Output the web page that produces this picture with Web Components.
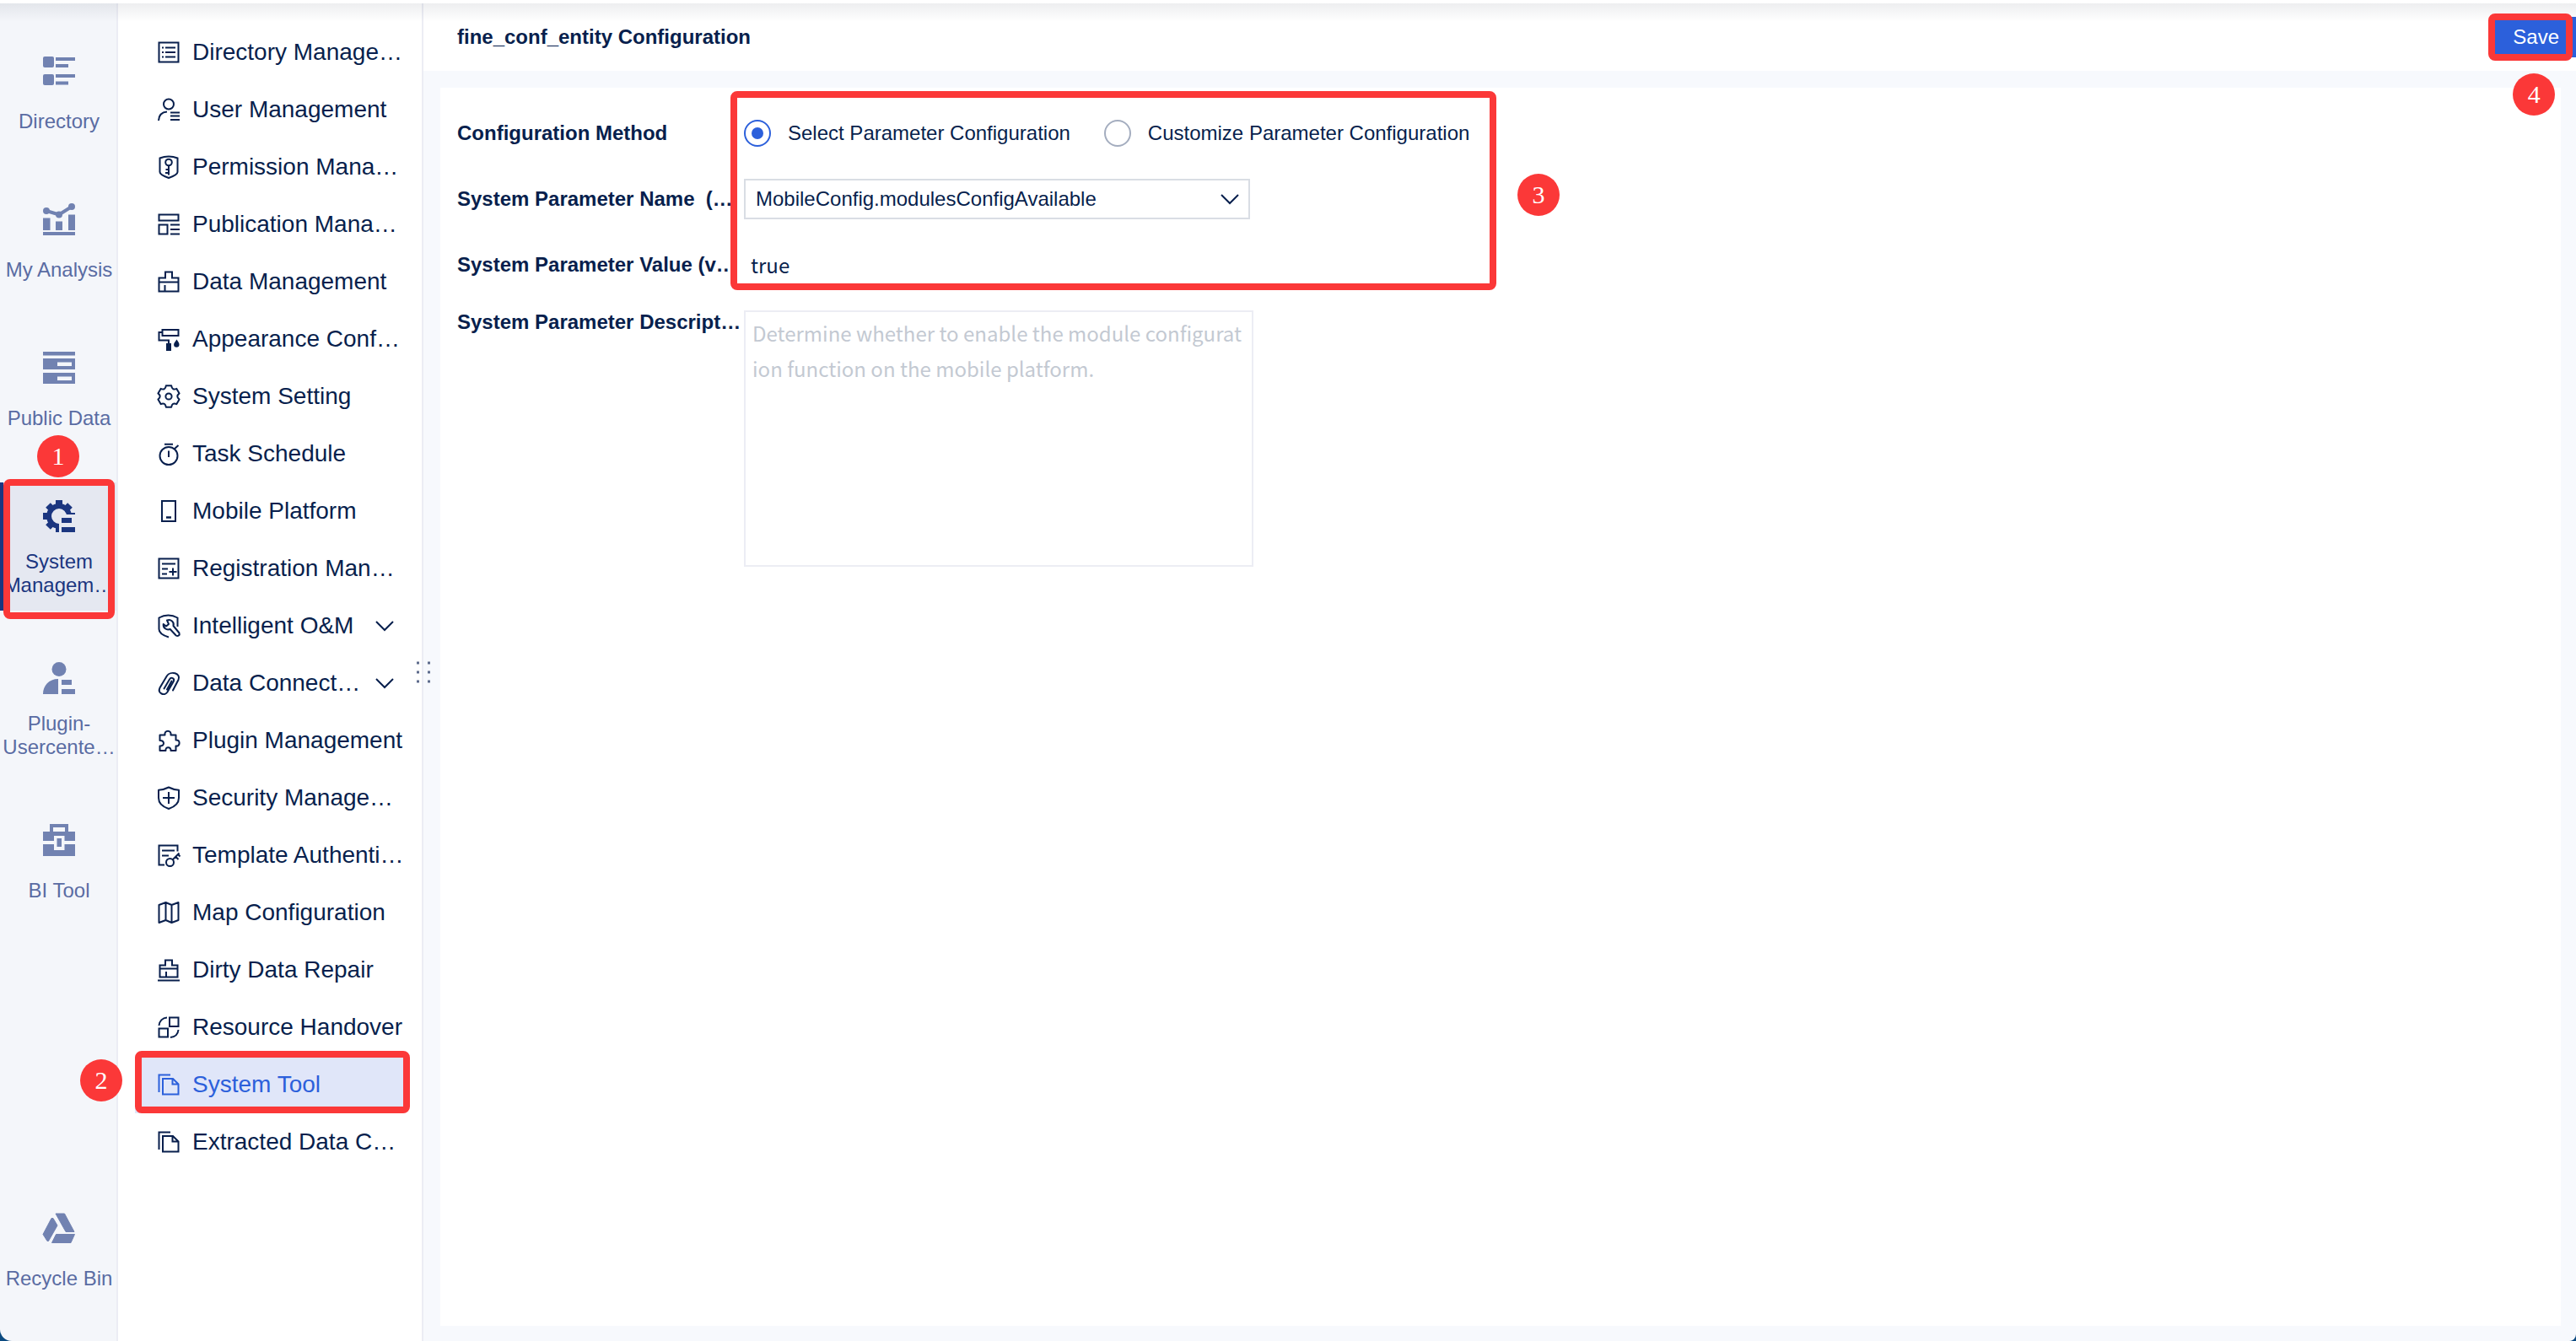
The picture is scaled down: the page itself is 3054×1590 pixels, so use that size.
<!DOCTYPE html>
<html lang="en">
<head>
<meta charset="utf-8">
<title>System Tool</title>
<style>
  html, body {
    margin: 0;
    background: #fff;
  }

  body {
    --ink: #081f4d;
    --blue: #2c60db;
    --red: #fb3838;
    --line: #ecedf4;
    --page: #f7f9fd;
    color: var(--ink);
    font: 24px/28px "Liberation Sans", Arial, sans-serif;
  }
</style>
</head>
<body>
<app-shell>
  <nav-rail slot="rail">
    <rail-item icon="directory">Directory</rail-item>
    <rail-item icon="analysis">My Analysis</rail-item>
    <rail-item icon="public">Public Data</rail-item>
    <rail-item icon="system" active>System<br>Managem…
      <step-mark slot="mark" n="1" style="--frame: -4px 2px -10px 4px; --x: 44px; --y: -56px"></step-mark>
    </rail-item>
    <rail-item icon="plugin-user">Plugin-<br>Usercente…</rail-item>
    <rail-item icon="tool">BI Tool</rail-item>
    <rail-item icon="recycle" class="last">Recycle Bin</rail-item>
  </nav-rail>

  <side-menu slot="menu">
    <menu-item icon="list">Directory Manage…</menu-item>
    <menu-item icon="user">User Management</menu-item>
    <menu-item icon="permission">Permission Mana…</menu-item>
    <menu-item icon="publication">Publication Mana…</menu-item>
    <menu-item icon="data">Data Management</menu-item>
    <menu-item icon="appearance">Appearance Conf…</menu-item>
    <menu-item icon="gear">System Setting</menu-item>
    <menu-item icon="timer">Task Schedule</menu-item>
    <menu-item icon="mobile">Mobile Platform</menu-item>
    <menu-item icon="registration">Registration Man…</menu-item>
    <menu-item icon="wrench" expandable>Intelligent O&amp;M</menu-item>
    <menu-item icon="clip" expandable>Data Connect…</menu-item>
    <menu-item icon="puzzle">Plugin Management</menu-item>
    <menu-item icon="security">Security Manage…</menu-item>
    <menu-item icon="template">Template Authenti…</menu-item>
    <menu-item icon="map">Map Configuration</menu-item>
    <menu-item icon="repair">Dirty Data Repair</menu-item>
    <menu-item icon="handover">Resource Handover</menu-item>
    <menu-item icon="files" active>System Tool
      <step-mark slot="mark" n="2" style="--frame: -6px -6px 0 0; --x: -65px; --y: 4px"></step-mark>
    </menu-item>
    <menu-item icon="files">Extracted Data C…</menu-item>
  </side-menu>

  <page-header slot="header">
    fine_conf_entity Configuration
    <step-mark slot="mark" n="4" style="--frame: -4px 4px -4px -5px; --x: 24px; --y: 67px"></step-mark>
  </page-header>

  <config-form></config-form>
</app-shell>

<script>
  // 28x28 outline icons for the menu, 38x38 solid icons for the rail
  const ICONS = {
    list: '<path d="M2.5 2.5h23v23h-23zM6 8.5h2M6 14h2M6 19.5h2M10 8.5h12M10 14h12M10 19.5h12"/>',
    user: '<circle cx="14" cy="7.5" r="6"/><path d="M2 27c.3-6.500 4-10 10-10.500M16 17.500h11M16 21.500h11M16 26h11"/>',
    permission: '<path d="M14 1.500c-4 0-7.500.8-10.500 2V20c0 3 5 5 10.500 7 5.500-2 10.500-4 10.500-7V3.500c-3-1.200-6.500-2-10.500-2z"/><circle cx="14" cy="8.500" r="3.800"/><path d="M14 12.500v11M10.500 17H14M10 21h4"/>',
    publication: '<path d="M2.500 2.500h23v7h-23zM2.500 14.500h10v11h-10zM16 14.500h11M16 20h11M16 25.500h11"/>',
    data: '<path d="M2.500 9.500h7.500v-7h8v7h7.500v16h-23zM2.500 14.500h23M9.500 18v7"/>',
    appearance: '<path d="M6.500 3h19v7h-19zM6 6H2.500v9.500H14V20"/><path class="f" d="M11 19h6v9h-6zM23.500 14.500c2 3 3 4.200 3 6a3.200 3.200 0 0 1-6.400 0c0-1.800 1.400-3 3.400-6z"/>',
    gear: '<g transform="translate(14 14)"><path stroke-linejoin="round" d="M-3.200-12.700H3.200Q4-6.900 9.400-9.100L12.600-3.600Q8 0 12.600 3.600L9.400 9.100Q4 6.900 3.200 12.700H-3.200Q-4 6.900-9.400 9.100L-12.600 3.600Q-8 0-12.600-3.600L-9.400-9.100Q-4-6.900-3.200-12.700z"/><circle r="3.600"/></g>',
    timer: '<circle cx="14" cy="16.500" r="10.500"/><path d="M9 2.700h10M14 10.500V18M20.500 8.500l5-4.500"/>',
    mobile: '<path d="M6 2h16v24H6z"/><path d="M11 21.500h6" stroke-width="2.500"/>',
    registration: '<path d="M2.500 2.500h23v23h-23zM6 8.500h16M6 14.500h7M6 20.500h6M14.500 18h9M19 13.500v9"/>',
    wrench: '<path d="M24.500 15V4.500C21 2.500 17.500 1.500 13.500 1.500s-7.500 1-11 3V18c0 5 5 7.500 11.500 9.500"/><path stroke-linejoin="round" d="M12 7.500c4.500-1.800 9 2 7.500 6.500l7 8.500c1 2.500-1.500 4.500-3.800 3l-7-7.500c-4.500 1.500-8.500-1.500-8-6l3.300 2.500 3-2.500z"/>',
    clip: '<path stroke-linecap="round" d="M8.500 20.500 15 9.500c2-3.300 6.500-1 4.700 2.500l-7.200 12.500c-3.500 5.500-12 1.500-9-5L11.800 5.500C16-1 29 2 25.500 10L19 22.500M12 21.500l5.500-10"/>',
    puzzle: '<path stroke-linejoin="round" d="M3.500 7.500h6c-1.200-6.500 8.200-6.500 7 0h6v6c5.500-1 5.500 8 0 7v5.500h-6c.8-5-7-5-6 0h-7v-5.500c6 .5 6-7 0-6.500z"/>',
    security: '<path stroke-linejoin="round" d="M14 1.500c3.500 1.800 7.500 3 12 3.200V14c0 6.500-4.500 10.500-12 13C6.500 24.500 2 20.500 2 14V4.700c4.500-.2 8.500-1.400 12-3.200zM7 14h14M14 7v14"/>',
    template: '<path d="M24.500 9.500v-7h-22v23H9M6 8.500h15M6 14.500h8"/><circle cx="15.500" cy="22.500" r="4.500"/><path d="m18.500 19.500 8-8M22.500 16l3 3M25 13l2.500 2.500"/>',
    map: '<path stroke-linejoin="round" d="m2.500 5 8-3 7 3 8-3v21l-8 3-7-3-8 3zM10.500 2v21M17.500 5v21"/>',
    repair: '<path d="M3.500 8.500h6.500v-6h8v6h6.500v14h-21zM3.500 12.500h21M11 16v6M1 26.500h26"/>',
    handover: '<path d="M15 2.500h10.500V13H15zM2.500 15.500H13v10H2.500zM2.500 12c.5-5 4-9 9.500-9.500M25.500 17c-.5 5-4 8.500-9.500 9"/>',
    files: '<path d="M2.500 23V2.500H16M7 7h12l6.500 6.500v12H7zM18.500 7v6.500h7"/>',
    directory: '<rect y="2" width="13" height="13" rx="2"/><rect y="23" width="13" height="13" rx="2"/><path d="M15 3h23v4H15zM15 11h15v4H15zM15 23h23v4H15zM15 31.500h15v4H15z"/>',
    analysis: '<path d="M0 17.500h8.500V32H0zM15 21.500h8V32h-8zM30 13.500h8V32h-8zM0 34h38v4H0z"/><circle cx="4" cy="9" r="4"/><circle cx="19" cy="13.500" r="4"/><circle cx="34" cy="4" r="4"/><path d="m4 9 15 4.500L34 4" fill="none" stroke="currentColor" stroke-width="4"/>',
    public: '<path fill-rule="evenodd" d="M0 0h38v4.500H0zM0 8h38v13H0zM17 12.500V17h17v-4.500zM0 25h38v13H0zM17 29.500V34h17v-4.500z"/>',
    system: '<clipPath id="c"><path d="M0 0h38v17H19v21H0z"/></clipPath><g clip-path="url(#c)" fill="none" stroke="currentColor"><circle cx="19" cy="19" r="12" stroke-width="6"/><path stroke-width="8" d="M19 0v7M19 38v-7M0 19h7M38 19h-7M6 6l5 5M32 6l-5 5M6 32l5-5"/></g><path d="M22 21h12v6H22zM22 32h16v6H22z"/>',
    'plugin-user': '<circle cx="19" cy="8.500" r="8.500"/><path d="M0 38C0 28 7 20 18 20v18zM22 21h12v6H22zM22 32h16v6H22z"/>',
    tool: '<path fill-rule="evenodd" d="M8 0h22v9h8v11H25.500v-6h-12.500v6H0V9h8zM12 4v5h14V4zM0 24h13v7h12.500v-7H38v14H0zM16.500 17h5.500v10h-5.500z"/>',
    recycle: '<path stroke="currentColor" stroke-linejoin="round" d="m15 2 10.500 0L37 23.500H27zM10 7.500h2l5 8.500L6.500 34.500H5L0 26.500zM15.500 26.500h22l-4.500 10H10.500z"/>',
  };

  function define(name, html) {
    customElements.define(name, class extends HTMLElement {
      constructor() {
        super();
        this.attachShadow({ mode: 'open' });
      }

      connectedCallback() {
        this.shadowRoot.innerHTML = typeof html === 'function' ? html(this) : html;
      }
    });
  }

  define('ui-icon', (el) => {
    const size = el.getAttribute('size') || 28;
    const solid = size === '38';
    return `
      <style>
        :host { display: block; flex: none; }
        svg { display: block; overflow: visible; }
        .f { fill: currentColor; stroke: none; }
      </style>
      <svg width="${size}" height="${size}" viewBox="0 0 ${size} ${size}" aria-hidden="true"
        ${solid ? 'fill="currentColor"' : 'fill="none" stroke="currentColor" stroke-width="2"'}>${ICONS[el.getAttribute('name')]}</svg>`;
  });

  define('step-mark', (el) => `
    <style>
      :host { position: absolute; inset: 0; z-index: 5; pointer-events: none; }
      .frame {
        position: absolute;
        inset: var(--frame);
        border: 8px solid var(--red);
        border-radius: 8px;
      }
      .badge {
        position: absolute;
        left: var(--x);
        top: var(--y);
        width: 50px;
        height: 50px;
        border-radius: 50%;
        background: var(--red);
        color: #fff;
        font: 30px/50px "Liberation Serif", "Times New Roman", serif;
        text-align: center;
      }
    </style>
    <div class="frame"></div>
    <div class="badge">${el.getAttribute('n')}</div>`);

  define('app-shell', `
    <style>
      :host { display: block; padding-top: 4px; }
      .app {
        position: relative;
        display: grid;
        grid-template-columns: 140px 362px minmax(0, 1fr);
        min-height: calc(100vh - 4px);
        background: #0b4a80;
      }
      .app::before {
        content: "";
        position: absolute;
        inset: 0 0 auto;
        height: 22px;
        background: linear-gradient(rgba(30, 40, 60, .08), rgba(30, 40, 60, 0));
        z-index: 2;
        pointer-events: none;
      }
      main {
        display: flex;
        flex-direction: column;
        background: var(--page);
        border-bottom-right-radius: 8px;
      }
      ::slotted(config-form) { flex: 1; }
    </style>
    <div class="app">
      <slot name="rail"></slot>
      <slot name="menu"></slot>
      <main><slot name="header"></slot><slot></slot></main>
    </div>`);

  define('nav-rail', `
    <style>
      :host {
        display: block;
        background: #f4f6fa;
        border-right: 2px solid var(--line);
        border-bottom-left-radius: 14px;
      }
      nav {
        box-sizing: border-box;
        height: 100%;
        display: flex;
        flex-direction: column;
        gap: 40px;
        padding: 40px 0 38px;
      }
      ::slotted(.last) { margin-top: auto; }
    </style>
    <nav><slot></slot></nav>`);

  define('rail-item', (el) => `
    <style>
      :host { display: block; position: relative; color: #5a6ca3; }
      a {
        display: flex;
        flex-direction: column;
        align-items: center;
        gap: 16px;
        padding: 16px 0 16px 2px;
        color: inherit;
        text-decoration: none;
      }
      ui-icon { height: 48px; display: grid; place-items: center; color: #7182b1; }
      .label {
        min-height: 40px;
        display: grid;
        place-items: center;
        text-align: center;
        white-space: nowrap;
      }
      :host([active]) { color: #1b3680; background: #e5e8f1; box-shadow: inset 4px 0 #1b3680; }
      :host([active]) ui-icon { color: #1b3680; }
    </style>
    <a href="#"><ui-icon name="${el.getAttribute('icon')}" size="38"></ui-icon>
      <span class="label"><span><slot></slot></span></span></a>
    <slot name="mark"></slot>`);

  define('side-menu', `
    <style>
      :host {
        display: block;
        position: relative;
        background: #fff;
        border-right: 2px solid var(--line);
      }
      nav { padding: 24px 20px; }
      /* resize grip sits astride the right border */
      .grip {
        position: absolute;
        right: -10px;
        top: 50%;
        z-index: 3;
        display: grid;
        grid-template-columns: 3px 3px;
        gap: 8px 10px;
        transform: translateY(-50%);
      }
      .grip i { height: 3px; background: #5d6b8c; }
    </style>
    <nav><slot></slot></nav>
    <div class="grip"><i></i><i></i><i></i><i></i><i></i><i></i></div>`);

  define('menu-item', (el) => `
    <style>
      :host { display: block; position: relative; }
      a {
        display: flex;
        align-items: center;
        gap: 14px;
        height: 68px;
        padding: 0 12px 0 26px;
        color: inherit;
        font-size: 28px;
        text-decoration: none;
        white-space: nowrap;
      }
      .label { flex: 1; min-width: 0; }
      .arrow { flex: none; }
      :host([active]) { background: #e0e6f9; color: var(--blue); }
    </style>
    <a href="#"><ui-icon name="${el.getAttribute('icon')}"></ui-icon><span class="label"><slot></slot></span>${el.hasAttribute('expandable')
      ? '<svg class="arrow" width="24" height="24" fill="none" stroke="currentColor" stroke-width="2"><path d="m2 7 10 10L22 7"/></svg>' : ''}</a>
    <slot name="mark"></slot>`);

  define('page-header', `
    <style>
      :host {
        display: flex;
        align-items: center;
        justify-content: space-between;
        height: 80px;
        padding-left: 40px;
        background: #fff;
      }
      h1 { margin: 0; font: inherit; font-weight: bold; }
      .action { position: relative; }
      button {
        display: block;
        height: 48px;
        padding: 0 20px 0 24px;
        border: 0;
        background: var(--blue);
        color: #fff;
        font: inherit;
      }
    </style>
    <h1><slot></slot></h1>
    <div class="action"><button type="button">Save</button><slot name="mark"></slot></div>`);

  define('form-row', (el) => `
    <style>
      :host {
        display: grid;
        grid-template-columns: 340px auto;
        justify-content: start;
        align-items: center;
        min-height: 48px;
      }
      :host([top]) { align-items: start; }
      .label { font-weight: bold; white-space: pre; }
    </style>
    <span class="label">${el.getAttribute('label')}</span>
    <slot></slot>`);

  define('config-form', `
    <style>
      :host { display: flex; padding: 20px 18px 18px 20px; }
      form {
        flex: 1;
        display: flex;
        flex-direction: column;
        gap: 30px;
        padding: 30px 20px;
        background: #fff;
      }
      .group {
        position: relative;
        width: fit-content;
        display: flex;
        flex-direction: column;
        gap: 30px;
      }
      .radios { display: flex; gap: 40px; }
      .radios label { display: flex; align-items: center; gap: 20px; white-space: nowrap; }
      input, select, textarea { box-sizing: border-box; margin: 0; color: inherit; font: inherit; }
      input[type="radio"] {
        appearance: none;
        display: grid;
        place-items: center;
        width: 32px;
        height: 32px;
        border: 2px solid #a4adbf;
        border-radius: 50%;
      }
      input[type="radio"]:checked { border-color: var(--blue); }
      input[type="radio"]:checked::before {
        content: "";
        width: 14px;
        height: 14px;
        border-radius: 50%;
        background: var(--blue);
      }
      .select { position: relative; width: 600px; }
      select {
        appearance: none;
        display: block;
        width: 100%;
        height: 48px;
        padding: 0 48px 0 12px;
        border: 2px solid #d9dde4;
        border-radius: 0;
        background: #fff;
      }
      .select svg { position: absolute; right: 12px; top: 12px; pointer-events: none; }
      input[type="text"], textarea { font-family: "Noto Sans CJK SC", "Noto Sans", sans-serif; }
      input[type="text"] { width: 600px; height: 48px; padding: 0 8px 2px; border: 0; background: none; }
      textarea {
        display: block;
        width: 604px;
        height: 304px;
        padding: 4px 8px;
        border: 2px solid var(--line);
        background: #fff;
        color: #c3c9d2;
        line-height: 42px;
        word-break: break-all;
        resize: none;
      }
    </style>
    <form>
      <div class="group">
        <form-row label="Configuration Method">
          <div class="radios">
            <label><input type="radio" name="method" checked>Select Parameter Configuration</label>
            <label><input type="radio" name="method">Customize Parameter Configuration</label>
          </div>
        </form-row>
        <form-row label="System Parameter Name&nbsp; (…">
          <div class="select">
            <select aria-label="System Parameter Name"><option>MobileConfig.modulesConfigAvailable</option></select>
            <svg width="24" height="24" fill="none" stroke="currentColor" stroke-width="2"><path d="m2 7 10 10L22 7"/></svg>
          </div>
        </form-row>
        <form-row label="System Parameter Value (v…">
          <input type="text" value="true" aria-label="System Parameter Value">
        </form-row>
        <step-mark n="3" style="--frame: -26px -32px -6px 324px; --x: 1257px; --y: 72px"></step-mark>
      </div>
      <form-row label="System Parameter Descript…" top>
        <textarea readonly aria-label="System Parameter Description">Determine whether to enable the module configuration function on the mobile platform.</textarea>
      </form-row>
    </form>`);
</script>
</body>
</html>
